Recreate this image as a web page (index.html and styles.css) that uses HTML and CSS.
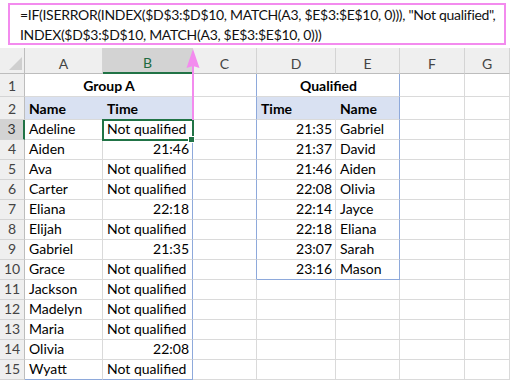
FILE: index.html
```html
<!DOCTYPE html>
<html>
<head>
<meta charset="utf-8">
<link rel="stylesheet" href="styles.css">
</head>
<body>
<div class="formula">=IF(ISERROR(INDEX($D$3:$D$10, MATCH(A3, $E$3:$E$10, 0))), "Not qualified",<br>INDEX($D$3:$D$10, MATCH(A3, $E$3:$E$10, 0)))</div>
<div class="sheet">
  <div class="corner"><span class="tri"></span></div>
  <div class="ch">A</div><div class="ch sel">B</div><div class="ch">C</div><div class="ch">D</div><div class="ch">E</div><div class="ch">F</div><div class="ch">G</div>

  <div class="rh">1</div>
  <div class="c m2 b tr">Group A</div><div class="c tr"></div><div class="c m2 b tr">Qualified</div><div class="c"></div><div class="c"></div>

  <div class="rh">2</div>
  <div class="c b hd nb">Name</div><div class="c b hd tr">Time</div><div class="c tr"></div><div class="c b hd nb">Time</div><div class="c b hd tr">Name</div><div class="c"></div><div class="c"></div>

  <div class="rh sel">3</div>
  <div class="c">Adeline</div><div class="c tr cur">Not qualified</div><div class="c tr"></div><div class="c r">21:35</div><div class="c tr">Gabriel</div><div class="c"></div><div class="c"></div>

  <div class="rh">4</div>
  <div class="c">Aiden</div><div class="c tr r">21:46</div><div class="c tr"></div><div class="c r">21:37</div><div class="c tr">David</div><div class="c"></div><div class="c"></div>

  <div class="rh">5</div>
  <div class="c">Ava</div><div class="c tr">Not qualified</div><div class="c tr"></div><div class="c r">21:46</div><div class="c tr">Aiden</div><div class="c"></div><div class="c"></div>

  <div class="rh">6</div>
  <div class="c">Carter</div><div class="c tr">Not qualified</div><div class="c tr"></div><div class="c r">22:08</div><div class="c tr">Olivia</div><div class="c"></div><div class="c"></div>

  <div class="rh">7</div>
  <div class="c">Eliana</div><div class="c tr r">22:18</div><div class="c tr"></div><div class="c r">22:14</div><div class="c tr">Jayce</div><div class="c"></div><div class="c"></div>

  <div class="rh">8</div>
  <div class="c">Elijah</div><div class="c tr">Not qualified</div><div class="c tr"></div><div class="c r">22:18</div><div class="c tr">Eliana</div><div class="c"></div><div class="c"></div>

  <div class="rh">9</div>
  <div class="c">Gabriel</div><div class="c tr r">21:35</div><div class="c tr"></div><div class="c r">23:07</div><div class="c tr">Sarah</div><div class="c"></div><div class="c"></div>

  <div class="rh">10</div>
  <div class="c">Grace</div><div class="c tr">Not qualified</div><div class="c tr"></div><div class="c r tb">23:16</div><div class="c tr tb">Mason</div><div class="c"></div><div class="c"></div>

  <div class="rh">11</div>
  <div class="c">Jackson</div><div class="c tr">Not qualified</div><div class="c"></div><div class="c"></div><div class="c"></div><div class="c"></div><div class="c"></div>

  <div class="rh">12</div>
  <div class="c">Madelyn</div><div class="c tr">Not qualified</div><div class="c"></div><div class="c"></div><div class="c"></div><div class="c"></div><div class="c"></div>

  <div class="rh">13</div>
  <div class="c">Maria</div><div class="c tr">Not qualified</div><div class="c"></div><div class="c"></div><div class="c"></div><div class="c"></div><div class="c"></div>

  <div class="rh">14</div>
  <div class="c">Olivia</div><div class="c tr r">22:08</div><div class="c"></div><div class="c"></div><div class="c"></div><div class="c"></div><div class="c"></div>

  <div class="rh">15</div>
  <div class="c tb">Wyatt</div><div class="c tr tb">Not qualified</div><div class="c"></div><div class="c"></div><div class="c"></div><div class="c"></div><div class="c"></div>
</div>
<svg class="arrow" width="16" height="74" viewBox="0 0 16 74">
  <path d="M8 0 L14.5 19 L8 17 L1.5 19 Z" fill="#f38bee"/>
  <rect x="7" y="17" width="2" height="54" fill="#f38bee"/>
</svg>
</body>
</html>
```
FILE: styles.css
```css
html, body {
  margin: 0;
  padding: 0;
  background: #fff;
}
body {
  width: 510px;
  height: 382px;
  overflow: hidden;
  position: relative;
  font-family: Lato, "Open Sans", sans-serif;
  color: #000;
}
.formula {
  box-sizing: border-box;
  margin: 3px 4px 0 8px;
  height: 42px;
  border: 2px solid #f38bee;
  padding: 0 0 0 10px;
  font-size: 14px;
  letter-spacing: -0.3px;
  line-height: 20px;
  white-space: nowrap;
  color: #111;
}
.sheet {
  margin-top: 3px;
  display: grid;
  grid-template-columns: 25px 78px 90px 64px 79px 64px 65px 45px;
  grid-template-rows: 26px 23px 23px repeat(13, 20px);
  font-size: 14px;
}
.sheet > div {
  box-sizing: border-box;
  min-width: 0;
  overflow: hidden;
  white-space: nowrap;
}
.corner {
  background: #efefef;
  border-right: 1px solid #bdbdbd;
  border-bottom: 1px solid #bdbdbd;
  display: flex;
  align-items: flex-end;
  justify-content: flex-end;
  padding: 0 2px 3px 0;
}
.tri {
  width: 0;
  height: 0;
  border-left: 13px solid transparent;
  border-bottom: 13px solid #cfcfcf;
}
.ch {
  background: #efefef;
  border-right: 1px solid #d4d4d4;
  border-bottom: 1px solid #bdbdbd;
  display: flex;
  align-items: flex-end;
  justify-content: center;
  padding-bottom: 0;
  color: #444;
  line-height: 18px;
}
.ch.sel {
  background: #d3d3d3;
  border-bottom: 2px solid #217346;
  color: #1e6b41;
}
.rh {
  background: #efefef;
  border-right: 1px solid #bdbdbd;
  border-bottom: 1px solid #d4d4d4;
  display: flex;
  align-items: flex-end;
  justify-content: center;
  padding-bottom: 1px;
  color: #444;
  line-height: 18px;
}
.rh.sel {
  background: #d3d3d3;
  border-right: 2px solid #217346;
  color: #333;
}
.c {
  border-right: 1px solid #dadada;
  border-bottom: 1px solid #dadada;
  display: flex;
  align-items: flex-end;
  padding: 0 3px 1px 4px;
  line-height: 18px;
  color: #000;
}
.r { justify-content: flex-end; }
.b { font-weight: bold; }
.m2 {
  grid-column: span 2;
  justify-content: center;
}
.hd { background: #d9e1f2; }
.nb { border-right-color: #d9e1f2; }
.tr { border-right-color: #8ea9db; }
.tb { border-bottom-color: #8ea9db; }
.cur {
  position: relative;
  z-index: 2;
  outline: 2px solid #217346;
  outline-offset: -1px;
  overflow: visible !important;
}
.cur::after {
  content: "";
  position: absolute;
  right: -3px;
  bottom: -4px;
  width: 5px;
  height: 5px;
  background: #217346;
  border: 1px solid #fff;
}
.arrow {
  position: absolute;
  left: 185px;
  top: 49px;
  z-index: 5;
}
```
